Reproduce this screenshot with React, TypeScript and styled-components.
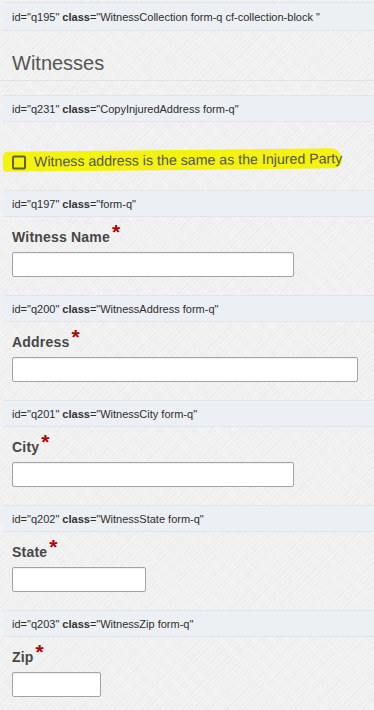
import React from "react";
import styled, { createGlobalStyle } from "styled-components";

const GlobalStyle = createGlobalStyle`
  html, body {
    margin: 0;
    padding: 0;
    background: #f0f0f0;
  }
  body {
    font-family: "Liberation Sans", Arial, sans-serif;
    background-color: #f0f0f0;
    background-image:
      repeating-linear-gradient(45deg, rgba(255,255,255,0.25) 0 1px, transparent 1px 3px),
      repeating-linear-gradient(-45deg, rgba(0,0,0,0.018) 0 1px, transparent 1px 4px);
  }
`;

const Page = styled.div`
  width: 374px;
  padding-top: 2px;
  overflow: hidden;
  font-family: "Liberation Sans", Arial, sans-serif;
`;

const InfoBar = styled.div<{ $tall?: boolean }>`
  margin-left: 3px;
  height: ${(p) => (p.$tall ? 27 : 25)}px;
  display: flex;
  align-items: center;
  padding-left: 9px;
  background: #eceff3;
  border-top: 1px solid #e2e6ea;
  border-bottom: 1px solid #e2e6ea;
  font-size: 11px;
  color: #2e2e2e;
  white-space: nowrap;

  b {
    font-weight: 700;
    color: #333;
  }
`;

const HeadingBlock = styled.div`
  height: 64px;
  box-sizing: border-box;
  padding-top: 20px;
`;

const Heading = styled.h2`
  margin: 0;
  padding-left: 12px;
  padding-bottom: 5px;
  font-size: 20px;
  font-weight: 400;
  line-height: 24px;
  color: #555;
  border-bottom: 1px solid #e4e4e4;
`;

const CheckBlock = styled.div`
  height: 68px;
  padding-top: 28px;
  box-sizing: border-box;
`;

const Highlight = styled.label`
  display: inline-flex;
  align-items: center;
  gap: 8px;
  margin-left: 3px;
  padding: 0 0 0 9px;
  height: 20px;
  background: #f4f20f;
  border-radius: 6px 14px 10px 4px;
  transform: rotate(-0.6deg);
  font-size: 14.2px;
  color: #555;
`;

const Box = styled.span`
  width: 10px;
  height: 10px;
  margin-top: 2px;
  border: 2px solid #62613a;
  border-radius: 2px;
  transform: rotate(0.6deg);
`;

const Field = styled.div`
  padding: 10px 12px 18px;
`;

const Label = styled.div`
  display: flex;
  align-items: flex-start;
  gap: 2px;
  height: 20px;
  line-height: 20px;
  font-size: 14px;
  font-weight: 700;
  color: #474747;
  letter-spacing: 0.2px;
  margin-bottom: 5px;
`;

const Star = styled.span`
  color: #b00000;
  font-size: 21px;
  font-weight: 700;
  line-height: 14px;
  margin-top: -2px;
`;

const Input = styled.input<{ $w: number }>`
  display: block;
  box-sizing: border-box;
  width: ${(p) => p.$w}px;
  height: 25px;
  margin: 0;
  background: #fff;
  border: 1px solid #a3a3a3;
  border-radius: 2px;
  box-shadow: inset 0 1px 1px rgba(0, 0, 0, 0.06);
`;

const fields = [
  { id: "q197", cls: "form-q", label: "Witness Name", w: 282 },
  { id: "q200", cls: "WitnessAddress form-q", label: "Address", w: 346 },
  { id: "q201", cls: "WitnessCity form-q", label: "City", w: 282 },
  { id: "q202", cls: "WitnessState form-q", label: "State", w: 134 },
  { id: "q203", cls: "WitnessZip form-q", label: "Zip", w: 89 },
];

function Bar({ id, cls, tall }: { id: string; cls: string; tall?: boolean }) {
  return (
    <InfoBar $tall={tall}>
      id="{id}"&nbsp;<b>class</b>="{cls}"
    </InfoBar>
  );
}

export default function App() {
  return (
    <Page>
      <GlobalStyle />
      <Bar id="q195" cls="WitnessCollection form-q cf-collection-block " tall />
      <HeadingBlock>
        <Heading>Witnesses</Heading>
      </HeadingBlock>
      <Bar id="q231" cls="CopyInjuredAddress form-q" />
      <CheckBlock>
        <Highlight>
          <Box />
          Witness address is the same as the Injured Party
        </Highlight>
      </CheckBlock>
      {fields.map((f) => (
        <React.Fragment key={f.id}>
          <Bar id={f.id} cls={f.cls} />
          <Field>
            <Label>
              {f.label}
              <Star>*</Star>
            </Label>
            <Input $w={f.w} type="text" />
          </Field>
        </React.Fragment>
      ))}
    </Page>
  );
}
